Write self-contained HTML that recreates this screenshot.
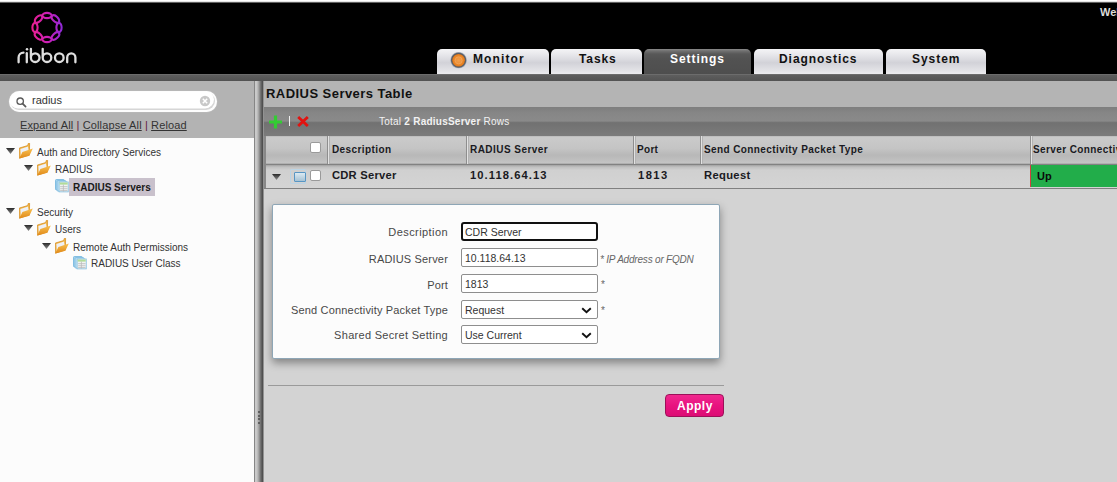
<!DOCTYPE html>
<html><head><meta charset="utf-8">
<style>
*{margin:0;padding:0;box-sizing:border-box}
html,body{width:1117px;height:482px;overflow:hidden;background:#d3d3d3;font-family:"Liberation Sans",sans-serif;position:relative}
.a{position:absolute}
.t{position:absolute;white-space:nowrap}
#topstrip{left:0;top:0;width:1117px;height:3px;background:linear-gradient(#fff 0,#fff 1px,#e4e4e4 1px,#e4e4e4 2px,#606060 2px,#606060 3px)}
#header{left:0;top:3px;width:1117px;height:71px;background:#000}
#band{left:0;top:74px;width:1117px;height:7px;background:linear-gradient(#6c6c6c 0,#6c6c6c 1px,#5e5e5e 1px,#535353 100%)}
.tab{position:absolute;top:49px;height:25px;border-radius:5px 5px 0 0;background:linear-gradient(#f4f4f6 0,#e6e6ea 25%,#d2d2d8 55%,#e2e2e6 85%,#ececef 100%);}
.tab.sel{background:linear-gradient(#8a8a8a 0,#707070 2px,#585858 5px,#525252 40%,#4e4e4e 100%)}
.tabt{position:absolute;top:53px;font-weight:bold;font-size:12px;line-height:12px;color:#111;letter-spacing:0.95px}
#left{left:0;top:81px;width:254px;height:401px;background:#fcfcfc}
#lefttop{left:0;top:81px;width:254px;height:57px;background:#b3b3b3}
#splitter{left:254px;top:81px;width:10px;height:401px;background:linear-gradient(90deg,#868686 0px,#868686 1px,#cacaca 1px,#cacaca 2px,#c8c8c8 2px,#c8c8c8 3px,#bababa 3px,#bababa 4px,#a6a6a6 4px,#a6a6a6 5px,#8e8e8e 5px,#8e8e8e 6px,#747474 6px,#747474 7px,#606060 7px,#606060 8px,#505050 8px,#505050 9px,#929292 9px,#929292 10px)}
#right{left:264px;top:81px;width:853px;height:401px;background:#d3d3d3}
.tree{position:absolute;font-size:10px;line-height:10px;color:#333;white-space:nowrap}
.hdr{position:absolute;font-size:10px;line-height:10px;font-weight:bold;color:#1a1a22;white-space:nowrap}
.lbl{position:absolute;font-size:11px;line-height:11px;color:#484848;letter-spacing:0.17px;white-space:nowrap;text-align:right;width:200px}
.inp{position:absolute;left:461px;width:137px;height:19px;border:1px solid #8e8e8e;border-radius:2px;background:#fff}
.inpt{position:absolute;left:465px;font-size:10.5px;line-height:10px;color:#333;white-space:nowrap}
</style></head><body>
<div class="a" id="topstrip"></div>
<div class="a" id="header"></div>
<!-- logo -->
<svg class="a" style="left:27px;top:7px" width="41" height="41" viewBox="0 0 41 41">
<defs><linearGradient id="lg" gradientUnits="userSpaceOnUse" x1="4" x2="36" y1="20" y2="20"><stop offset="0" stop-color="#ec1f8e"/><stop offset="0.55" stop-color="#c91fb8"/><stop offset="1" stop-color="#8a2ad8"/></linearGradient></defs>
<g fill="none" stroke="url(#lg)" stroke-width="2.1"><path d="M15.40,8.50 A4.6,2.6 0 1 0 24.60,8.50 A4.6,2.6 0 1 0 15.40,8.50Z M25.23,8.76 A4.6,2.6 45 1 0 31.74,15.27 A4.6,2.6 45 1 0 25.23,8.76Z M32.00,15.90 A4.6,2.6 90 1 0 32.00,25.10 A4.6,2.6 90 1 0 32.00,15.90Z M31.74,25.73 A4.6,2.6 135 1 0 25.23,32.24 A4.6,2.6 135 1 0 31.74,25.73Z M24.60,32.50 A4.6,2.6 180 1 0 15.40,32.50 A4.6,2.6 180 1 0 24.60,32.50Z M14.77,32.24 A4.6,2.6 225 1 0 8.26,25.73 A4.6,2.6 225 1 0 14.77,32.24Z M8.00,25.10 A4.6,2.6 270 1 0 8.00,15.90 A4.6,2.6 270 1 0 8.00,25.10Z M8.26,15.27 A4.6,2.6 315 1 0 14.77,8.76 A4.6,2.6 315 1 0 8.26,15.27Z"/></g></svg>
<svg class="a" style="left:0;top:40px" width="90" height="30" viewBox="0 40 90 30">
<g fill="none" stroke="#dedede" stroke-width="2.3" stroke-linecap="round">
<path d="M18.6,62.3 V57.6 A4.9,4.9 0 0 1 23.5,52.7"/>
<path d="M26.8,53.2 V62.3"/>
<path d="M30.9,48.8 V57.7 A4.3,4.3 0 1 0 39.5,57.7 A4.3,4.3 0 1 0 30.9,57.7"/>
<path d="M42.7,48.8 V57.7 A4.3,4.3 0 1 0 51.3,57.7 A4.3,4.3 0 1 0 42.7,57.7"/>
<circle cx="59.3" cy="57.7" r="4.3"/>
<path d="M67.2,62.3 V57.5 A4.1,4.1 0 0 1 75.4,57.5 V62.3"/>
</g>
<circle cx="27" cy="49.2" r="1.25" fill="#dedede"/>
</svg>
<div class="t" style="left:1100px;top:7px;font-size:11px;line-height:11px;font-weight:bold;color:#dcdcdc">Welcome</div>
<div class="a" id="band"></div>
<div class="tab" style="left:437px;width:112px"></div>
<div class="tab" style="left:551px;width:91px"></div>
<div class="tab sel" style="left:644px;width:107px"></div>
<div class="tab" style="left:754px;width:129px"></div>
<div class="tab" style="left:886px;width:100px"></div>
<svg class="a" style="left:450px;top:52px" width="17" height="17" viewBox="0 0 17 17">
<defs><radialGradient id="og" cx="0.5" cy="0.5" r="0.5"><stop offset="0" stop-color="#f0a050"/><stop offset="0.5" stop-color="#ee9238"/><stop offset="1" stop-color="#e27818"/></radialGradient>
<radialGradient id="rg" cx="0.5" cy="0.5" r="0.5"><stop offset="0.7" stop-color="#4c525c"/><stop offset="0.85" stop-color="#5c6470"/><stop offset="1" stop-color="#8a94a2" stop-opacity="0.3"/></radialGradient></defs>
<circle cx="8.6" cy="8.2" r="8.4" fill="url(#rg)"/>
<circle cx="8.6" cy="8.2" r="6.3" fill="url(#og)"/>
<circle cx="8.6" cy="8.4" r="3.5" fill="none" stroke="#f6b57a" stroke-width="0.8" opacity="0.55"/>
</svg>
<div class="tabt" style="left:473px;letter-spacing:1.1px">Monitor</div>
<div class="tabt" style="left:579px;letter-spacing:0.9px">Tasks</div>
<div class="tabt" style="left:670px;color:#fff">Settings</div>
<div class="tabt" style="left:779px">Diagnostics</div>
<div class="tabt" style="left:912px">System</div>

<div class="a" id="left"></div>
<div class="a" id="lefttop"></div>

<!-- search -->
<div class="a" style="left:9px;top:91px;width:208px;height:21px;border-radius:11px;background:#fdfdfd;box-shadow:0 0 1px 0 #e0e0e0"></div><div class="a" style="left:10px;top:92px;width:205px;height:18px;border-radius:10px;background:#fff;box-shadow:inset -1px -1.5px 0 #d6d6d6"></div>
<svg class="a" style="left:16px;top:97px" width="11" height="11" viewBox="0 0 11 11"><circle cx="4.2" cy="4.2" r="3.2" fill="none" stroke="#5a5a5a" stroke-width="1.3"/><path d="M6.6,6.6 L9.6,9.6" stroke="#5a5a5a" stroke-width="1.7" stroke-linecap="round"/></svg>
<div class="t" style="left:32px;top:95px;font-size:11px;line-height:11px;color:#333">radius</div>
<svg class="a" style="left:199px;top:95px" width="12" height="12" viewBox="0 0 12 12"><circle cx="6" cy="6" r="5.2" fill="#c8c8c8"/><path d="M3.8,3.8 L8.2,8.2 M8.2,3.8 L3.8,8.2" stroke="#fff" stroke-width="1.5"/></svg>
<div class="t" style="left:20px;top:120px;font-size:11px;line-height:11px;color:#333;letter-spacing:0.13px"><span style="text-decoration:underline">Expand All</span> <span style="color:#602040">|</span> <span style="text-decoration:underline">Collapse All</span> <span style="color:#602040">|</span> <span style="text-decoration:underline">Reload</span></div>

<svg width="0" height="0" style="position:absolute">
<defs>
<linearGradient id="tri" x1="0" x2="0" y1="0" y2="1"><stop offset="0" stop-color="#2a2a2a"/><stop offset="1" stop-color="#8a8a8a"/></linearGradient>
<linearGradient id="fold" x1="0" x2="0" y1="0" y2="1"><stop offset="0" stop-color="#f8c050"/><stop offset="1" stop-color="#e08818"/></linearGradient>
<linearGradient id="foldb" x1="0" x2="0" y1="0" y2="1"><stop offset="0" stop-color="#e8a640"/><stop offset="1" stop-color="#c67716"/></linearGradient>
<symbol id="arrow" viewBox="0 0 9 6"><path d="M0,0 H9 L4.5,6 Z" fill="url(#tri)"/></symbol>
<symbol id="folder" viewBox="0 0 14 16">
<path d="M0.4,5 L8.6,2.6 L9.4,0.3 L10.6,0.3 L10.4,12 L0.4,15.2 Z" fill="#f2b646" stroke="#d48a1c" stroke-width="0.7"/>
<path d="M1.4,6 L9,3.6 L10,10.5 L1.8,13.2 Z" fill="#eef0f6"/>
<path d="M0.3,15.4 L3.4,9 L13.8,5.6 L10.4,12.8 Z" fill="url(#fold)"/>
</symbol>
<symbol id="tbl" viewBox="0 0 15 15">
<rect x="0.5" y="0.6" width="9.5" height="11" rx="1" fill="#a4d4ee" stroke="#70b4dc" stroke-width="0.9"/>
<rect x="2.2" y="1.8" width="9.8" height="11.2" rx="1" fill="#c2e2f4" stroke="#7ab8de" stroke-width="0.9"/>
<rect x="4.4" y="3.2" width="9.8" height="10.6" fill="#f0f2f2" stroke="#86c0e0" stroke-width="0.9"/>
<rect x="5" y="3.8" width="8.6" height="2.2" fill="#b2dc98"/>
<path d="M5.5,8.2 H13.4 M5.5,10.4 H13.4 M5.5,12.4 H13.4 M9,6 V13.4" stroke="#b8b8b8" stroke-width="0.8"/>
</symbol>
</defs></svg>

<svg class="a" style="left:6px;top:148px" width="9" height="6"><use href="#arrow"/></svg>
<svg class="a" style="left:19px;top:143px" width="14" height="16"><use href="#folder"/></svg>
<div class="tree" style="left:37px;top:148px">Auth and Directory Services</div>
<svg class="a" style="left:24px;top:165px" width="9" height="6"><use href="#arrow"/></svg>
<svg class="a" style="left:37px;top:160px" width="14" height="16"><use href="#folder"/></svg>
<div class="tree" style="left:55px;top:165px">RADIUS</div>
<svg class="a" style="left:55px;top:179px" width="14" height="14"><use href="#tbl"/></svg>
<div class="a" style="left:69px;top:178px;width:86px;height:18px;background:#c9c1cc"></div>
<div class="tree" style="left:73px;top:183px;font-weight:bold;color:#1a1a1a">RADIUS Servers</div>
<svg class="a" style="left:6px;top:208px" width="9" height="6"><use href="#arrow"/></svg>
<svg class="a" style="left:19px;top:203px" width="14" height="16"><use href="#folder"/></svg>
<div class="tree" style="left:37px;top:208px">Security</div>
<svg class="a" style="left:24px;top:225px" width="9" height="6"><use href="#arrow"/></svg>
<svg class="a" style="left:37px;top:220px" width="14" height="16"><use href="#folder"/></svg>
<div class="tree" style="left:55px;top:225px">Users</div>
<svg class="a" style="left:42px;top:243px" width="9" height="6"><use href="#arrow"/></svg>
<svg class="a" style="left:55px;top:238px" width="14" height="16"><use href="#folder"/></svg>
<div class="tree" style="left:73px;top:243px">Remote Auth Permissions</div>
<svg class="a" style="left:73px;top:256px" width="14" height="14"><use href="#tbl"/></svg>
<div class="tree" style="left:91px;top:259px">RADIUS User Class</div>
<div class="a" id="splitter"></div>
<div class="a" id="right"></div>

<div class="a" style="left:264px;top:81px;width:853px;height:26px;background:#b4b4b4"></div>
<div class="t" style="left:266px;top:87px;font-size:13px;line-height:13px;font-weight:bold;color:#111;letter-spacing:0.45px">RADIUS Servers Table</div>
<div class="a" style="left:264px;top:107px;width:853px;height:29px;background:linear-gradient(#7e7e7e 0,#868686 20%,#8a8a8a 48%,#717171 54%,#777777 80%,#7c7c7c 100%)"></div>
<svg class="a" style="left:269px;top:115px" width="14" height="14" viewBox="0 0 14 14"><path d="M6.5,0.5 V13.5 M0,7 H13" stroke="#33cc33" stroke-width="3.2"/></svg>
<div class="a" style="left:289px;top:116px;width:1px;height:10px;background:#f0f0f0"></div>
<svg class="a" style="left:297px;top:116px" width="12" height="11" viewBox="0 0 12 11"><path d="M1.2,1 L10.8,10 M10.8,1 L1.2,10" stroke="#e3120f" stroke-width="2.8"/></svg>
<div class="t" style="left:379px;top:117px;font-size:10px;line-height:10px;color:#f2f2f2;letter-spacing:0.24px">Total <b>2 RadiusServer</b> Rows</div>
<!-- table header -->
<div class="a" style="left:264px;top:136px;width:2px;height:52px;background:#888"></div><div class="a" style="left:266px;top:136px;width:851px;height:28px;background:linear-gradient(#b4b4b4 0,#cacaca 1px,#cacaca 10%,#c4c4c4 45%,#b8b8b8 68%,#bcbcbc 80%,#c4c4c4 96%,#a0a0a0 100%)"></div>
<div class="a" style="left:327px;top:136px;width:1px;height:28px;background:#8e8e8e"></div>
<div class="a" style="left:328px;top:136px;width:1px;height:28px;background:#e2e2e2"></div><div class="a" style="left:329px;top:136px;width:1px;height:28px;background:#b2b2b2"></div>
<div class="a" style="left:466px;top:136px;width:1px;height:28px;background:#8e8e8e"></div>
<div class="a" style="left:467px;top:136px;width:1px;height:28px;background:#e2e2e2"></div><div class="a" style="left:468px;top:136px;width:1px;height:28px;background:#b2b2b2"></div>
<div class="a" style="left:633px;top:136px;width:1px;height:28px;background:#8e8e8e"></div>
<div class="a" style="left:634px;top:136px;width:1px;height:28px;background:#e2e2e2"></div><div class="a" style="left:635px;top:136px;width:1px;height:28px;background:#b2b2b2"></div>
<div class="a" style="left:700px;top:136px;width:1px;height:28px;background:#8e8e8e"></div>
<div class="a" style="left:701px;top:136px;width:1px;height:28px;background:#e2e2e2"></div><div class="a" style="left:702px;top:136px;width:1px;height:28px;background:#b2b2b2"></div>
<div class="a" style="left:1030px;top:136px;width:1px;height:28px;background:#8e8e8e"></div>
<div class="a" style="left:1031px;top:136px;width:1px;height:28px;background:#e2e2e2"></div><div class="a" style="left:1032px;top:136px;width:1px;height:28px;background:#b2b2b2"></div>
<div class="a" style="left:310px;top:142px;width:11px;height:11px;border:1px solid #9a9a9a;border-radius:2px;background:#fff"></div>
<div class="hdr" style="left:332px;top:145px;letter-spacing:0.4px">Description</div>
<div class="hdr" style="left:470px;top:145px;letter-spacing:0.45px">RADIUS Server</div>
<div class="hdr" style="left:637px;top:145px;letter-spacing:0.3px">Port</div>
<div class="hdr" style="left:704px;top:145px;letter-spacing:0.4px">Send Connectivity Packet Type</div>
<div class="hdr" style="left:1033px;top:145px;letter-spacing:0.4px">Server Connectivity</div>
<!-- data row -->
<div class="a" style="left:266px;top:164px;width:851px;height:24px;background:linear-gradient(#828282 0,#828282 1px,#a2a2a2 1px,#c0c0c0 3px,#d0d0d0 6px,#d4d4d4 100%)"></div>
<div class="a" style="left:264px;top:188px;width:853px;height:1px;background:#808080"></div>
<svg class="a" style="left:272px;top:174px" width="9" height="6"><use href="#arrow"/></svg>
<div class="a" style="left:290px;top:169px;width:16px;height:15px;border:1px solid #bcd4e4;border-radius:1px"></div>
<div class="a" style="left:294px;top:172px;width:12px;height:10px;border:1.5px solid #5896c4;border-radius:1px;background:linear-gradient(#dceaf2,#a6c2d4)"></div>
<div class="a" style="left:310px;top:170px;width:11px;height:11px;border:1px solid #9a9a9a;border-radius:2px;background:#fff"></div>
<div class="hdr" style="left:332px;top:171px;letter-spacing:0.2px;transform:scaleX(1.12);transform-origin:0 0">CDR Server</div>
<div class="hdr" style="left:470px;top:171px;letter-spacing:0.95px;transform:scaleX(1.12);transform-origin:0 0">10.118.64.13</div>
<div class="hdr" style="left:638px;top:171px;letter-spacing:1.25px;transform:scaleX(1.12);transform-origin:0 0">1813</div>
<div class="hdr" style="left:704px;top:171px;letter-spacing:0.3px;transform:scaleX(1.12);transform-origin:0 0">Request</div>
<div class="a" style="left:1030px;top:165px;width:87px;height:22px;background:#22ad4a;border-left:1px solid #d04040"></div>
<div class="t" style="left:1037px;top:171px;font-size:11px;line-height:11px;color:#0a0a0a;font-weight:bold">Up</div>


<!-- form panel -->
<div class="a" style="left:272px;top:204px;width:448px;height:155px;background:#fcfcfc;border:1px solid #8ea6b6;border-radius:2px;box-shadow:0 4px 8px rgba(0,0,0,0.38)"></div>
<div class="lbl" style="left:248px;top:227px;letter-spacing:0.42px">Description</div>
<div class="lbl" style="left:248px;top:254px">RADIUS Server</div>
<div class="lbl" style="left:248px;top:280px">Port</div>
<div class="lbl" style="left:248px;top:305px">Send Connectivity Packet Type</div>
<div class="lbl" style="left:248px;top:330px;letter-spacing:0.3px">Shared Secret Setting</div>
<div class="inp" style="top:222px;border:2px solid #111;border-radius:3px"></div>
<div class="inpt" style="top:227px">CDR Server</div>
<div class="inp" style="top:248px"></div>
<div class="inpt" style="top:253px">10.118.64.13</div>
<div class="t" style="left:600px;top:255px;font-size:10px;line-height:10px;color:#666;font-style:italic;letter-spacing:-0.2px">* IP Address or FQDN</div>
<div class="inp" style="top:274px"></div>
<div class="inpt" style="top:279px">1813</div>
<div class="t" style="left:601px;top:280px;font-size:10px;line-height:10px;color:#666">*</div>
<div class="inp" style="top:300px"></div>
<div class="inpt" style="top:305px">Request</div>
<svg class="a" style="left:581px;top:306px" width="11" height="8" viewBox="0 0 11 8"><path d="M1.2,2.2 L5.5,6.2 L9.8,2.2" fill="none" stroke="#111" stroke-width="1.9"/></svg>
<div class="t" style="left:601px;top:306px;font-size:10px;line-height:10px;color:#666">*</div>
<div class="inp" style="top:325px"></div>
<div class="inpt" style="top:330px">Use Current</div>
<svg class="a" style="left:581px;top:331px" width="11" height="8" viewBox="0 0 11 8"><path d="M1.2,2.2 L5.5,6.2 L9.8,2.2" fill="none" stroke="#111" stroke-width="1.9"/></svg>
<div class="a" style="left:268px;top:385px;width:456px;height:1px;background:#9a9a9a"></div>
<div class="a" style="left:665px;top:394px;width:59px;height:23px;border-radius:4px;background:linear-gradient(#f0288e,#e8137f 50%,#dc0c74);border:1px solid #9c1058"></div>
<div class="t" style="left:677px;top:400px;font-size:12px;line-height:12px;font-weight:bold;color:#fff;letter-spacing:0.5px">Apply</div>
<!-- splitter grip -->
<div class="a" style="left:258px;top:411px;width:2px;height:2px;background:#4a4a4a;border-radius:1px;box-shadow:0 4px 0 #4a4a4a,0 7px 0 #4a4a4a,0 11px 0 #4a4a4a"></div>
</body></html>
